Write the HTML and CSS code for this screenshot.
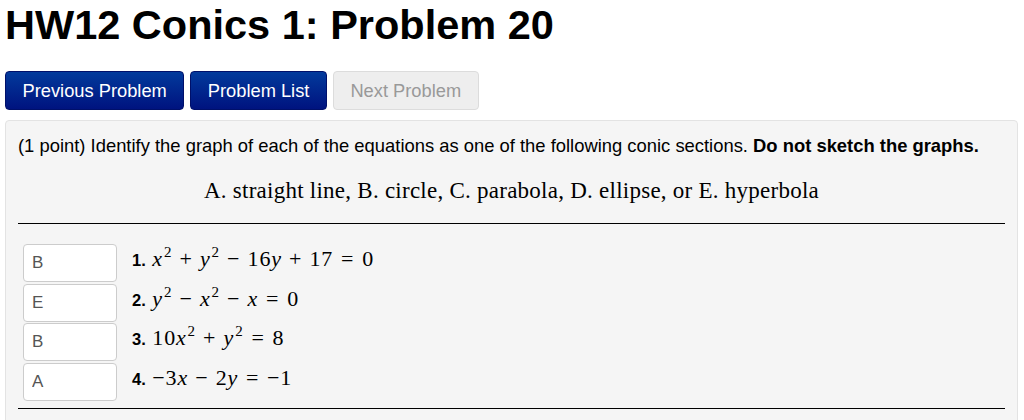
FILE: index.html
```html
<!DOCTYPE html>
<html lang="en">

<head>
    <meta charset="UTF-8">
    <meta name="viewport" content="width=device-width, initial-scale=1.0">
    <title>HW12 Conics 1: Problem 20</title>
    <link rel="stylesheet" href="styles.css">
</head>

<body>

    <h1 class="problem-title">HW12 Conics 1: Problem 20</h1>

    <div class="nav-buttons">
        <a class="btn btn-primary">Previous Problem</a>
        <a class="btn btn-primary">Problem List</a>
        <a class="btn btn-disabled">Next Problem</a>
    </div>

    <div class="problem-box">
        <p class="intro">(1 point) Identify the graph of each of the equations as one of the following conic sections. <b>Do not sketch the graphs.</b></p>
        <p class="choices">A. straight line, B. circle, C. parabola, D. ellipse, or E. hyperbola</p>
        <hr>

        <div class="answer-row">
            <input class="answer" type="text" value="B">
            <span class="eq"><b>1.</b> <span class="math"><i>x</i><sup>2</sup><span class="mo">+</span><i>y</i><sup>2</sup><span class="mo">&minus;</span>16<i>y</i><span class="mo">+</span>17<span class="rel">=</span>0</span></span>
        </div>
        <div class="answer-row">
            <input class="answer" type="text" value="E">
            <span class="eq"><b>2.</b> <span class="math"><i>y</i><sup>2</sup><span class="mo">&minus;</span><i>x</i><sup>2</sup><span class="mo">&minus;</span><i>x</i><span class="rel">=</span>0</span></span>
        </div>
        <div class="answer-row">
            <input class="answer" type="text" value="B">
            <span class="eq"><b>3.</b> <span class="math">10<i>x</i><sup>2</sup><span class="mo">+</span><i>y</i><sup>2</sup><span class="rel">=</span>8</span></span>
        </div>
        <div class="answer-row">
            <input class="answer" type="text" value="A">
            <span class="eq"><b>4.</b> <span class="math">&minus;3<i>x</i><span class="mo">&minus;</span>2<i>y</i><span class="rel">=</span>&minus;1</span></span>
        </div>

        <hr class="bottom-rule">
    </div>

</body>

</html>
```

FILE: styles.css
```css
*,
*::before,
*::after {
    box-sizing: border-box;
}

body {
    margin: 0;
    padding: 0 6px 0 5px;
    font-family: "Liberation Sans", Arial, sans-serif;
    color: #000;
    background: #fff;
}

.problem-title {
    margin: 0;
    padding-top: 1px;
    font-size: 41.5px;
    line-height: 47px;
    font-weight: bold;
}

.nav-buttons {
    display: flex;
    gap: 6px;
    margin-top: 23px;
}

.btn {
    display: inline-block;
    font-size: 18.3px;
    line-height: 19px;
    padding: 9px 16.5px;
    border: 1px solid transparent;
    border-radius: 4px;
    text-decoration: none;
    cursor: pointer;
}

.btn-primary {
    color: #fff;
    background: linear-gradient(to bottom, #023a9c, #00137f);
    border-color: #00106a;
}

.btn-disabled {
    color: #999;
    background: #eeeeee;
    border-color: #dcdcdc;
    cursor: default;
}

.problem-box {
    margin-top: 10px;
    padding: 14px 12px 0;
    background-color: #f5f5f5;
    border: 1px solid #e3e3e3;
    border-radius: 4px;
    min-height: 320px;
}

.intro {
    margin: 0;
    font-size: 18.4px;
    line-height: 22px;
}

.choices {
    margin: 21px 0 0;
    text-align: center;
    font-family: "Liberation Serif", "Times New Roman", serif;
    font-size: 23px;
    line-height: 26px;
    letter-spacing: 0.25px;
}

hr {
    margin: 19px 0 0;
    border: 0;
    border-top: 1px solid #000;
}

.answer-row {
    display: flex;
    align-items: center;
    height: 39.7px;
}

.answer-row:first-of-type {
    margin-top: 19px;
}

.answer {
    width: 94px;
    height: 38px;
    margin: 0 15px 0 5px;
    padding: 0 8px;
    font-family: "Liberation Sans", Arial, sans-serif;
    font-size: 17px;
    color: #555;
    background: #fff;
    border: 1px solid #ccc;
    border-radius: 4px;
}

.eq {
    font-size: 16.5px;
    padding-bottom: 8px;
}

.math {
    font-family: "Liberation Serif", "Times New Roman", serif;
    font-size: 22px;
    letter-spacing: 0.8px;
    margin-left: 2px;
}

.math sup {
    font-size: 15px;
    vertical-align: 9px;
    line-height: 0;
    margin-left: 1px;
}

.math .mo {
    margin: 0 0.33em;
}

.math .rel {
    margin: 0 0.36em;
}

.bottom-rule {
    margin-top: 6px;
}
```
